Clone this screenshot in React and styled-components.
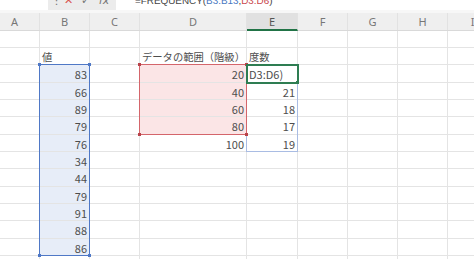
import React from 'react';
import styled, { createGlobalStyle } from 'styled-components';

const GlobalStyle = createGlobalStyle`
  html, body { margin: 0; padding: 0; background: #fff; overflow: hidden; }
  body { width: 474px; height: 259px; font-family: "Noto Sans CJK JP", "Noto Sans", sans-serif; }
`;

const COLS = [
  { key: 'A', w: 50 },
  { key: 'B', w: 50 },
  { key: 'C', w: 50 },
  { key: 'D', w: 107 },
  { key: 'E', w: 51 },
  { key: 'F', w: 50 },
  { key: 'G', w: 50 },
  { key: 'H', w: 50 },
  { key: 'I', w: 50 },
];
const ROW_H = [17, 17, 18, 17, 17, 18, 17, 17, 18, 17, 17, 18, 17, 17];

const colLeft = (i) => COLS.slice(0, i).reduce((s, c) => s + c.w, 0);
const rowTop = (i) => ROW_H.slice(0, i).reduce((s, h) => s + h, 0);

const Page = styled.div`
  width: 474px;
  height: 259px;
  overflow: hidden;
  background: #fff;
  display: flex;
  flex-direction: column;
`;

const FormulaBar = styled.div`
  display: flex;
  height: 10px;
  flex-shrink: 0;
  overflow: hidden;
  background: #fff;
`;

const NameBox = styled.div`
  width: 44px;
  background: #fff;
`;

const FxTools = styled.div`
  box-sizing: border-box;
  width: 68px;
  margin-left: 4px;
  background: #ececec;
  display: flex;
  align-items: flex-end;
  padding: 0 0 3px 3px;
  gap: 6px;
`;

const ToolGlyph = styled.span`
  font-family: "DejaVu Sans", sans-serif;
  font-size: ${(p) => p.$size || 11}px;
  line-height: 13px;
  color: ${(p) => p.$color || '#777'};
  font-style: ${(p) => (p.$italic ? 'italic' : 'normal')};
  width: ${(p) => p.$w || 11}px;
  text-align: center;
  flex-shrink: 0;
`;

const FormulaInput = styled.div`
  flex: 1;
  margin-left: 4px;
  background: #fff;
  display: flex;
  align-items: flex-end;
  padding: 0 0 3px 15px;
  font-family: "Liberation Sans", sans-serif;
  font-size: 9.9px;
  line-height: 13px;
  color: #444;
  white-space: nowrap;
`;

const Ref = styled.span`
  color: ${(p) => p.$color};
`;

const Strip = styled.div`
  height: 3px;
  flex-shrink: 0;
  background: #f7f7f7;
`;

const Sheet = styled.div`
  margin-left: -10px;
  display: flex;
  flex-direction: column;
`;

const HeaderRow = styled.div`
  display: flex;
  height: 18px;
  background: #efefef;
  border-bottom: 1px solid #d9d9d9;
  box-sizing: border-box;
`;

const HeaderCell = styled.div`
  width: ${(p) => p.$w}px;
  flex-shrink: 0;
  box-sizing: border-box;
  display: flex;
  align-items: center;
  justify-content: center;
  font-family: "Noto Sans", sans-serif;
  font-size: 11px;
  color: ${(p) => (p.$active ? '#555' : '#777')};
  background: ${(p) => (p.$active ? '#e1e1e1' : 'transparent')};
  border-right: 1px solid #e2e2e2;
  border-bottom: ${(p) => (p.$active ? '2px solid #217346' : 'none')};
  margin-bottom: ${(p) => (p.$active ? '-1px' : '0')};
`;

const Body = styled.div`
  position: relative;
  display: flex;
  flex-direction: column;
`;

const Row = styled.div`
  display: flex;
  height: ${(p) => p.$h}px;
`;

const Cell = styled.div`
  width: ${(p) => p.$w}px;
  flex-shrink: 0;
  box-sizing: border-box;
  border-right: 1px solid #e4e4e4;
  border-bottom: 1px solid #e4e4e4;
  background: ${(p) => p.$fill || '#fff'};
  display: flex;
  align-items: center;
  justify-content: ${(p) => (p.$right ? 'flex-end' : 'flex-start')};
  padding: 1px 2px 0 2px;
  font-size: ${(p) => (p.$latin ? 11 : 10.3)}px;
  color: #4d4d4d;
  white-space: nowrap;
  overflow: visible;
`;

const Range = styled.div`
  position: absolute;
  box-sizing: border-box;
  border: ${(p) => p.$bw || 1}px solid ${(p) => p.$color};
  pointer-events: none;
`;

const Handle = styled.span`
  position: absolute;
  width: 3px;
  height: 3px;
  background: ${(p) => p.$color};
  ${(p) => (p.$top ? 'top: -2px;' : 'bottom: -2px;')}
  ${(p) => (p.$left ? 'left: -2px;' : 'right: -2px;')}
`;

const BLUE_FILL = '#e7edf8';
const RED_FILL = '#fbe5e6';

const data = {
  1: { B: { t: '値' }, D: { t: 'データの範囲（階級）' }, E: { t: '度数' } },
  2: { B: { t: '83', n: 1 }, D: { t: '20', n: 1 }, E: { t: 'D3:D6)', edit: 1 } },
  3: { B: { t: '66', n: 1 }, D: { t: '40', n: 1 }, E: { t: '21', n: 1 } },
  4: { B: { t: '89', n: 1 }, D: { t: '60', n: 1 }, E: { t: '18', n: 1 } },
  5: { B: { t: '79', n: 1 }, D: { t: '80', n: 1 }, E: { t: '17', n: 1 } },
  6: { B: { t: '76', n: 1 }, D: { t: '100', n: 1 }, E: { t: '19', n: 1 } },
  7: { B: { t: '34', n: 1 } },
  8: { B: { t: '44', n: 1 } },
  9: { B: { t: '79', n: 1 } },
  10: { B: { t: '91', n: 1 } },
  11: { B: { t: '88', n: 1 } },
  12: { B: { t: '86', n: 1 } },
};

const fillFor = (r, key) => {
  if (key === 'B' && r >= 2 && r <= 12) return BLUE_FILL;
  if (key === 'D' && r >= 2 && r <= 5) return RED_FILL;
  return null;
};

const box = (c0, r0, c1, r1, extend = 0) => {
  const left = colLeft(c0) - 1;
  const top = rowTop(r0) - 1;
  const right = colLeft(c1 + 1);
  const bottom = rowTop(r1 + 1);
  return { left, top, width: right - left + extend, height: bottom - top + extend };
};

const Corners = ({ color }) => (
  <>
    <Handle $color={color} $top $left />
    <Handle $color={color} $top />
    <Handle $color={color} $left />
    <Handle $color={color} />
  </>
);

export default function App() {
  return (
    <>
      <GlobalStyle />
      <Page>
        <FormulaBar>
          <NameBox />
          <FxTools>
            <ToolGlyph $w={6}>⋮</ToolGlyph>
            <ToolGlyph $color="#d9534f">✕</ToolGlyph>
            <ToolGlyph>✓</ToolGlyph>
            <ToolGlyph $italic $size={11} $w={14}>fx</ToolGlyph>
          </FxTools>
          <FormulaInput>
            =FREQUENCY(<Ref $color="#4a78c2">B3:B13</Ref>,<Ref $color="#c9474d">D3:D6</Ref>)
          </FormulaInput>
        </FormulaBar>
        <Strip />
        <Sheet>
          <HeaderRow>
            {COLS.map((c) => (
              <HeaderCell key={c.key} $w={c.w} $active={c.key === 'E'}>
                {c.key}
              </HeaderCell>
            ))}
          </HeaderRow>
          <Body>
            {ROW_H.map((h, r) => (
              <Row key={r} $h={h}>
                {COLS.map((c) => {
                  const d = (data[r] || {})[c.key];
                  return (
                    <Cell
                      key={c.key}
                      $w={c.w}
                      $right={d && d.n}
                      $latin={d && (d.n || d.edit)}
                      $fill={fillFor(r, c.key)}
                    >
                      {d ? d.t : ''}
                    </Cell>
                  );
                })}
              </Row>
            ))}
            <Range $color="#a9bce3" style={box(4, 2, 4, 6)} />
            <Range $color="#4f78c6" style={box(1, 2, 1, 12)}>
              <Corners color="#4f78c6" />
            </Range>
            <Range $color="#d4656b" style={box(3, 2, 3, 5)}>
              <Corners color="#b9434a" />
            </Range>
            <Range $color="#2e7d52" $bw={2} style={box(4, 2, 4, 2, 1)}>
              <Handle $color="#2e7d52" />
            </Range>
          </Body>
        </Sheet>
      </Page>
    </>
  );
}
